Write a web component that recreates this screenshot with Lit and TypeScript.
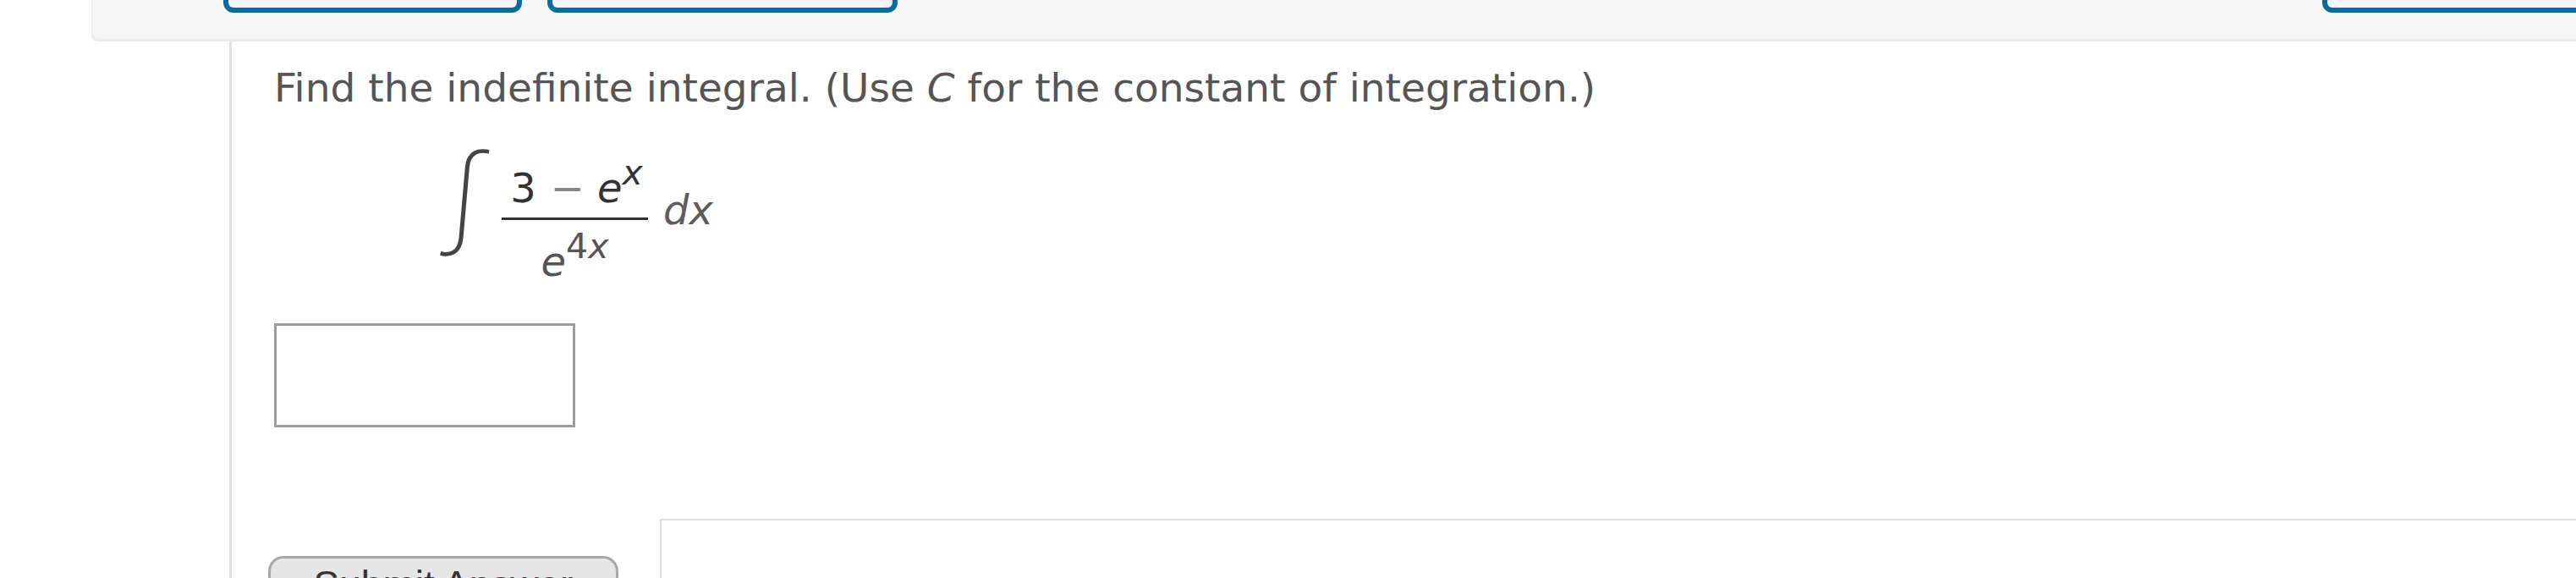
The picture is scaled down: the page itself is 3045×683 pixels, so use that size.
import { LitElement, html, css } from "lit";
import { customElement } from "lit/decorators.js";

@customElement("app-root")
export class AppRoot extends LitElement {
  static styles = css`
    :host { display: block; width: 3045px; height: 683px; overflow: hidden; background: #fefefe; font-family: "DejaVu Sans", Verdana, sans-serif; color: #555; }
    .toolbar { box-sizing: border-box; margin-left: 108px; height: 49px; background: #f6f6f6; border-left: 2px solid #ececec; border-bottom: 3px solid #ececec; border-bottom-left-radius: 8px; display: flex; padding-left: 154px; overflow: hidden; }
    .tb { box-sizing: border-box; height: 15px; border: 6px solid #0a6ba3; border-top: 0; border-radius: 0 0 12px 12px; background: #f5f3fb; flex: none; }
    .b1 { width: 353px; }
    .b2 { width: 414px; margin-left: 30px; }
    .b3 { width: 500px; margin-left: 1684px; }
    .main { margin-left: 271px; border-left: 3px solid #e2e2e2; padding-left: 50px; height: 634px; box-sizing: border-box; }
    .q { font-size: 47px; line-height: 52px; padding-top: 29px; white-space: nowrap; color: #555; }
    .q i { font-style: italic; }
    .math { display: flex; align-items: center; margin-left: 197px; margin-top: 26px; height: 204px; font-size: 48px; }
    .int { display: block; box-sizing: border-box; font-family: Roboto, sans-serif; font-weight: 200; font-size: 130px; line-height: 150px; width: 72px; padding-left: 12px; padding-bottom: 54px; color: #444; transform: skewX(-5deg); }
    .frac { display: flex; flex-direction: column; align-items: center; width: 173px; }
    .num { box-sizing: border-box; height: 73px; line-height: 70px; padding-left: 4px; border-bottom: 3px solid #333; width: 100%; text-align: center; color: #333; white-space: nowrap; }
    .den { height: 70px; line-height: 98px; white-space: nowrap; color: #555; }
    .op { color: #888; margin: 0 15px 0 17px; }
    sup { font-size: 41px; line-height: 0; vertical-align: 21px; }
    .dx { font-style: italic; margin-left: 18px; padding-bottom: 20px; color: #5c5c5c; }
    .answer { box-sizing: border-box; width: 356px; height: 123px; margin-top: 22px; border: 3px solid #9c9c9c; background: #fff; }
    .foot { display: flex; align-items: flex-start; margin-top: 108px; margin-left: -7px; }
    .submit { box-sizing: border-box; flex: none; width: 414px; height: 70px; margin-top: 44px; background: #e6e6e6; border: 3px solid #a8a8a8; border-bottom: 0; border-radius: 18px 18px 0 0; font-family: "Liberation Sans", Arial, sans-serif; font-size: 46px; color: #333; text-align: center; line-height: 62px; white-space: nowrap; }
    .box { box-sizing: border-box; flex: none; width: 2400px; height: 100px; margin-left: 49px; border: 2px solid #dedede; background: #fff; }
  `;
  render() {
    return html`
      <div class="toolbar">
        <div class="tb b1"></div><div class="tb b2"></div><div class="tb b3"></div>
      </div>
      <div class="main">
        <div class="q">Find the indefinite integral. (Use <i>C</i> for the constant of integration.)</div>
        <div class="math">
          <span class="int">∫</span>
          <div class="frac">
            <div class="num">3<span class="op">−</span><i>e<sup>x</sup></i></div>
            <div class="den"><i>e</i><sup>4<i>x</i></sup></div>
          </div>
          <span class="dx">dx</span>
        </div>
        <div class="answer"></div>
        <div class="foot">
          <div class="submit">Submit Answer</div>
          <div class="box"></div>
        </div>
      </div>
    `;
  }
}
